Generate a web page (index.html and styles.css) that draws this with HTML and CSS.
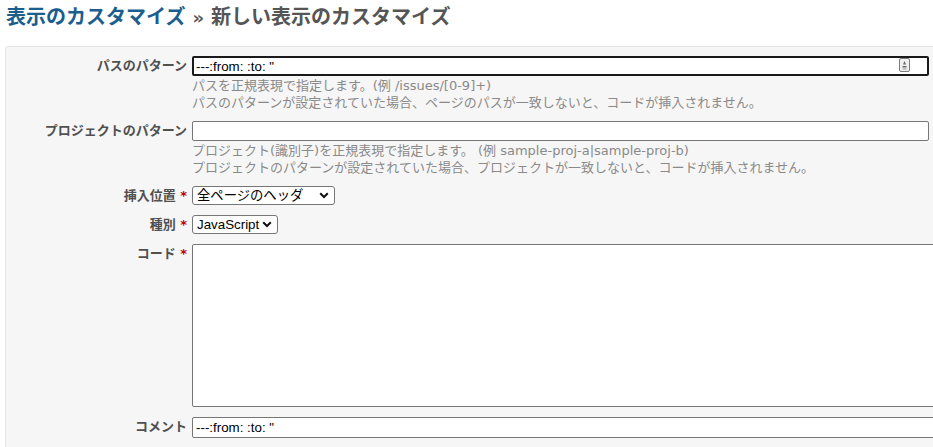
FILE: index.html
```html
<!DOCTYPE html>
<html lang="ja">
<head>
<meta charset="utf-8">
<title>新しい表示のカスタマイズ</title>
<link rel="stylesheet" href="styles.css">
</head>
<body>
<h2 class="title"><a class="crumb" href="#">表示のカスタマイズ</a> <span class="sep">»</span> 新しい表示のカスタマイズ</h2>
<form class="box">
  <div class="row">
    <label class="label">パスのパターン</label>
    <div class="field">
      <div class="input-wrap">
        <input class="text text-path focused" type="text" value='---:from: :to: "'>
        <svg class="fill-icon" width="12" height="14" viewBox="0 0 12 14" aria-hidden="true">
          <rect x="0.5" y="0.5" width="10" height="13" rx="1.5" fill="#f0f0f0" stroke="#7c7c7c"/>
          <path d="M5.5 3 L7 6.5 L4 6.5 Z" fill="#6a6a6a"/>
          <rect x="3.5" y="8" width="4" height="1.5" fill="#6a6a6a"/>
          <rect x="3.5" y="10.5" width="4" height="1" fill="#9a9a9a"/>
        </svg>
      </div>
      <p class="hint">パスを正規表現で指定します。(例 /issues/[0-9]+)<br>パスのパターンが設定されていた場合、ページのパスが一致しないと、コードが挿入されません。</p>
    </div>
  </div>
  <div class="row">
    <label class="label">プロジェクトのパターン</label>
    <div class="field">
      <input class="text text-project" type="text" value="">
      <p class="hint">プロジェクト(識別子)を正規表現で指定します。 (例 sample-proj-a|sample-proj-b)<br>プロジェクトのパターンが設定されていた場合、プロジェクトが一致しないと、コードが挿入されません。</p>
    </div>
  </div>
  <div class="row">
    <label class="label label-select">挿入位置 <span class="required">*</span></label>
    <div class="field">
      <span class="select select-position">
        <select><option>全ページのヘッダ</option></select>
        <svg class="chevron" width="10" height="7" viewBox="0 0 10 7" aria-hidden="true"><path d="M1.2 1.2 L5 5 L8.8 1.2" fill="none" stroke="#111" stroke-width="2"/></svg>
      </span>
    </div>
  </div>
  <div class="row">
    <label class="label label-select">種別 <span class="required">*</span></label>
    <div class="field">
      <span class="select select-type">
        <select><option>JavaScript</option></select>
        <svg class="chevron" width="10" height="7" viewBox="0 0 10 7" aria-hidden="true"><path d="M1.2 1.2 L5 5 L8.8 1.2" fill="none" stroke="#111" stroke-width="2"/></svg>
      </span>
    </div>
  </div>
  <div class="row">
    <label class="label">コード <span class="required">*</span></label>
    <div class="field">
      <textarea class="code"></textarea>
    </div>
  </div>
  <div class="row">
    <label class="label">コメント</label>
    <div class="field">
      <input class="text text-comment" type="text" value='---:from: :to: "'>
    </div>
  </div>
</form>
</body>
</html>
```
FILE: styles.css
```css
html, body {
  margin: 0;
  padding: 0;
  overflow: hidden;
  background: #ffffff;
}

body {
  font-family: "DejaVu Sans", "Noto Sans CJK JP", sans-serif;
  font-size: 13px;
  color: #505050;
}

.title {
  margin: 5px 0 16px 6px;
  font-family: "DejaVu Sans", "Noto Sans CJK JP", sans-serif;
  font-size: 20px;
  line-height: 24px;
  font-weight: bold;
  color: #555555;
  white-space: nowrap;
}

.crumb {
  color: #1b5e8e;
  text-decoration: none;
}

.sep {
  font-size: 18px;
}

.box {
  margin: 0 0 0 5px;
  width: 1000px;
  box-sizing: border-box;
  padding: 4px 0 10px 0;
  background: #f6f6f6;
  border: 1px solid #e4e4e4;
  border-radius: 3px;
}

.row {
  display: flex;
  gap: 5px;
  padding: 5px 0;
}

.label {
  flex: 0 0 181px;
  text-align: right;
  font-weight: bold;
  font-size: 13px;
  line-height: 20px;
  color: #505050;
  white-space: nowrap;
}

.label-select {
  line-height: 19px;
}

.required {
  color: #bb0000;
}

.field {
  flex: 1 1 auto;
  min-width: 0;
}

.input-wrap {
  position: relative;
  width: 737px;
}

.text {
  display: block;
  box-sizing: border-box;
  height: 20px;
  margin: 0;
  padding: 0 3px;
  border: 1px solid #767676;
  border-radius: 2px;
  background: #ffffff;
  font-family: "Liberation Sans", "Noto Sans CJK JP", sans-serif;
  font-size: 13.33px;
  color: #000000;
  outline: none;
}

.text.focused {
  border: 2px solid #1a1a1a;
  padding: 0 2px;
}

.text-path {
  width: 737px;
}

.text-project {
  width: 737px;
}

.text-comment {
  width: 800px;
  height: 21px;
}

.fill-icon {
  position: absolute;
  right: 18px;
  top: 2px;
}

.hint {
  margin: 1px 0 0 0;
  font-size: 13px;
  line-height: 17px;
  color: #8a8a8a;
  white-space: nowrap;
}

.select {
  display: inline-flex;
  align-items: center;
  box-sizing: border-box;
  height: 19px;
  border: 1px solid #767676;
  border-radius: 3px;
  background: #ffffff;
  padding-right: 5px;
  vertical-align: top;
}

.select select {
  appearance: none;
  -webkit-appearance: none;
  flex: 1 1 auto;
  min-width: 0;
  border: none;
  background: transparent;
  margin: 0;
  padding: 0 0 0 4px;
  height: 17px;
  font-family: "Liberation Sans", "Noto Sans CJK JP", sans-serif;
  font-size: 13.33px;
  color: #000000;
  outline: none;
}

.select-position {
  width: 143px;
}

.select-type {
  width: 86px;
}

.chevron {
  flex: 0 0 auto;
}

.code {
  display: block;
  box-sizing: border-box;
  width: 800px;
  height: 163px;
  margin: 0;
  border: 1px solid #767676;
  border-radius: 2px;
  background: #ffffff;
  resize: none;
  outline: none;
}
```
